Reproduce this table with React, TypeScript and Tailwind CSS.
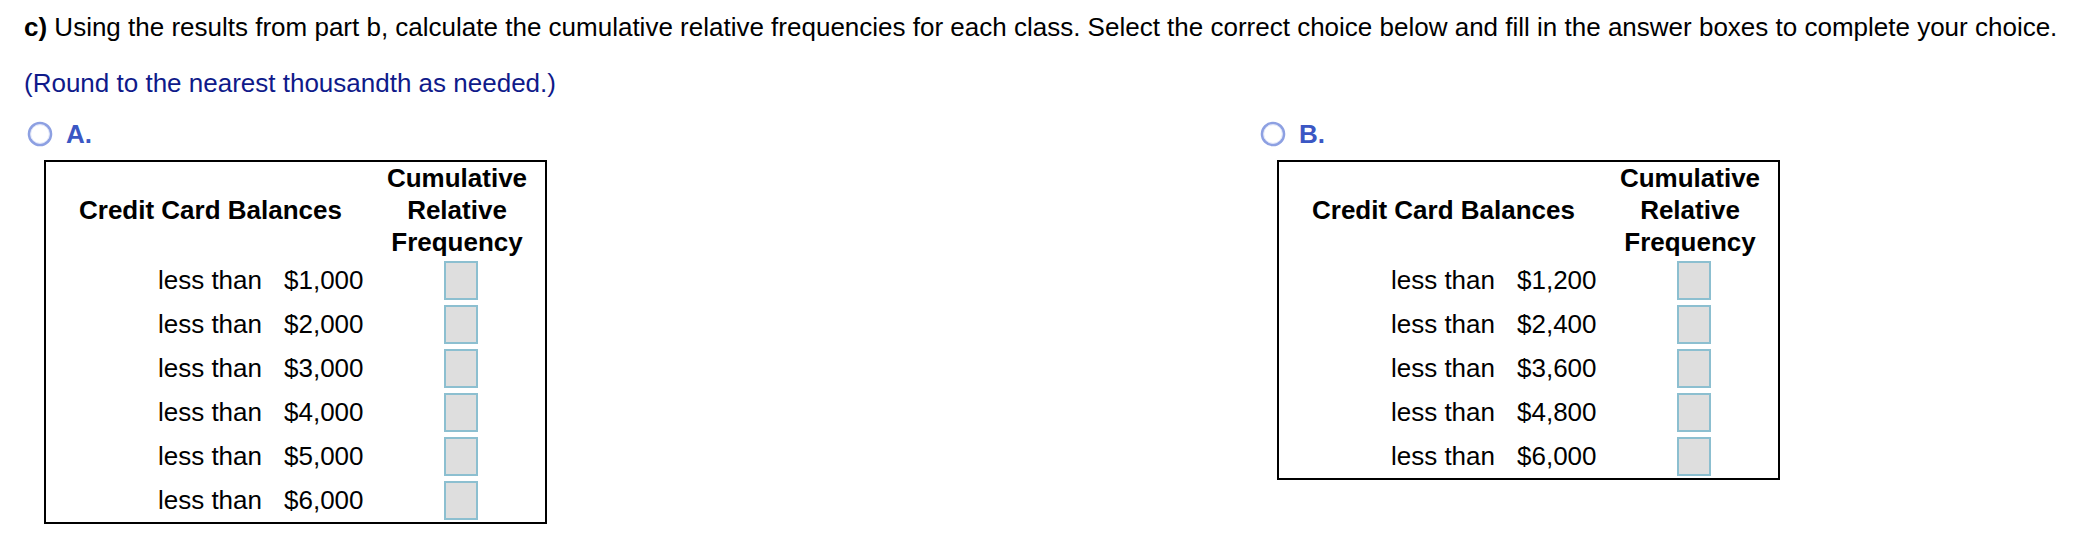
import React from "react";

function Radio() {
  return (
    <svg width="26" height="26" viewBox="0 0 26 26" className="shrink-0">
      <circle cx="13" cy="13" r="11" fill="#ffffff" stroke="#8da0e2" strokeWidth="2.6" />
      <circle cx="13" cy="13" r="9.4" fill="none" stroke="#d4dcf6" strokeWidth="0.8" />
    </svg>
  );
}

function Box() {
  return <div className="w-[34px] h-[39px] border-2 border-[#8cbfd0] bg-[#dedede]" />;
}

function FreqTable({ amounts }: { amounts: string[] }) {
  return (
    <div className="w-[503px] border-2 border-black">
      <div className="flex h-[96px]">
        <div className="w-[329px] flex items-center justify-center font-bold leading-[32px]">
          Credit Card Balances
        </div>
        <div className="w-[170px] flex flex-col items-center font-bold leading-[32px] pr-[6px]">
          <span>Cumulative</span>
          <span>Relative</span>
          <span>Frequency</span>
        </div>
      </div>
      {amounts.map((a) => (
        <div key={a} className="flex h-[44px] items-center leading-[44px]">
          <div className="w-[329px] flex">
            <span className="w-[216px] text-right">less than</span>
            <span className="pl-[22px]">{a}</span>
          </div>
          <div className="w-[170px] flex justify-center pl-[2px]">
            <Box />
          </div>
        </div>
      ))}
    </div>
  );
}

function Choice({ letter, amounts, width }: { letter: string; amounts: string[]; width: string }) {
  return (
    <div className={width}>
      <div className="flex items-center h-[30px] leading-[30px]">
        <Radio />
        <span className="ml-[13px] font-bold text-[#3b57c4]">{letter}.</span>
      </div>
      <div className="mt-[11px] ml-[17px]">
        <FreqTable amounts={amounts} />
      </div>
    </div>
  );
}

export default function App() {
  return (
    <div className="w-[2084px] h-[550px] bg-white text-black text-[26px] font-['Liberation_Sans',Arial,sans-serif] pl-[24px] pt-[12px]">
      <p className="leading-[30px] whitespace-nowrap">
        <b>c)</b> Using the results from part b, calculate the cumulative relative frequencies for each class. Select the
        correct choice below and fill in the answer boxes to complete your choice.
      </p>
      <p className="leading-[30px] mt-[26px] text-[#0f1a8a]">(Round to the nearest thousandth as needed.)</p>
      <div className="flex mt-[21px] pl-[3px]">
        <Choice
          letter="A"
          width="w-[1233px]"
          amounts={["$1,000", "$2,000", "$3,000", "$4,000", "$5,000", "$6,000"]}
        />
        <Choice letter="B" width="w-[600px]" amounts={["$1,200", "$2,400", "$3,600", "$4,800", "$6,000"]} />
      </div>
    </div>
  );
}
